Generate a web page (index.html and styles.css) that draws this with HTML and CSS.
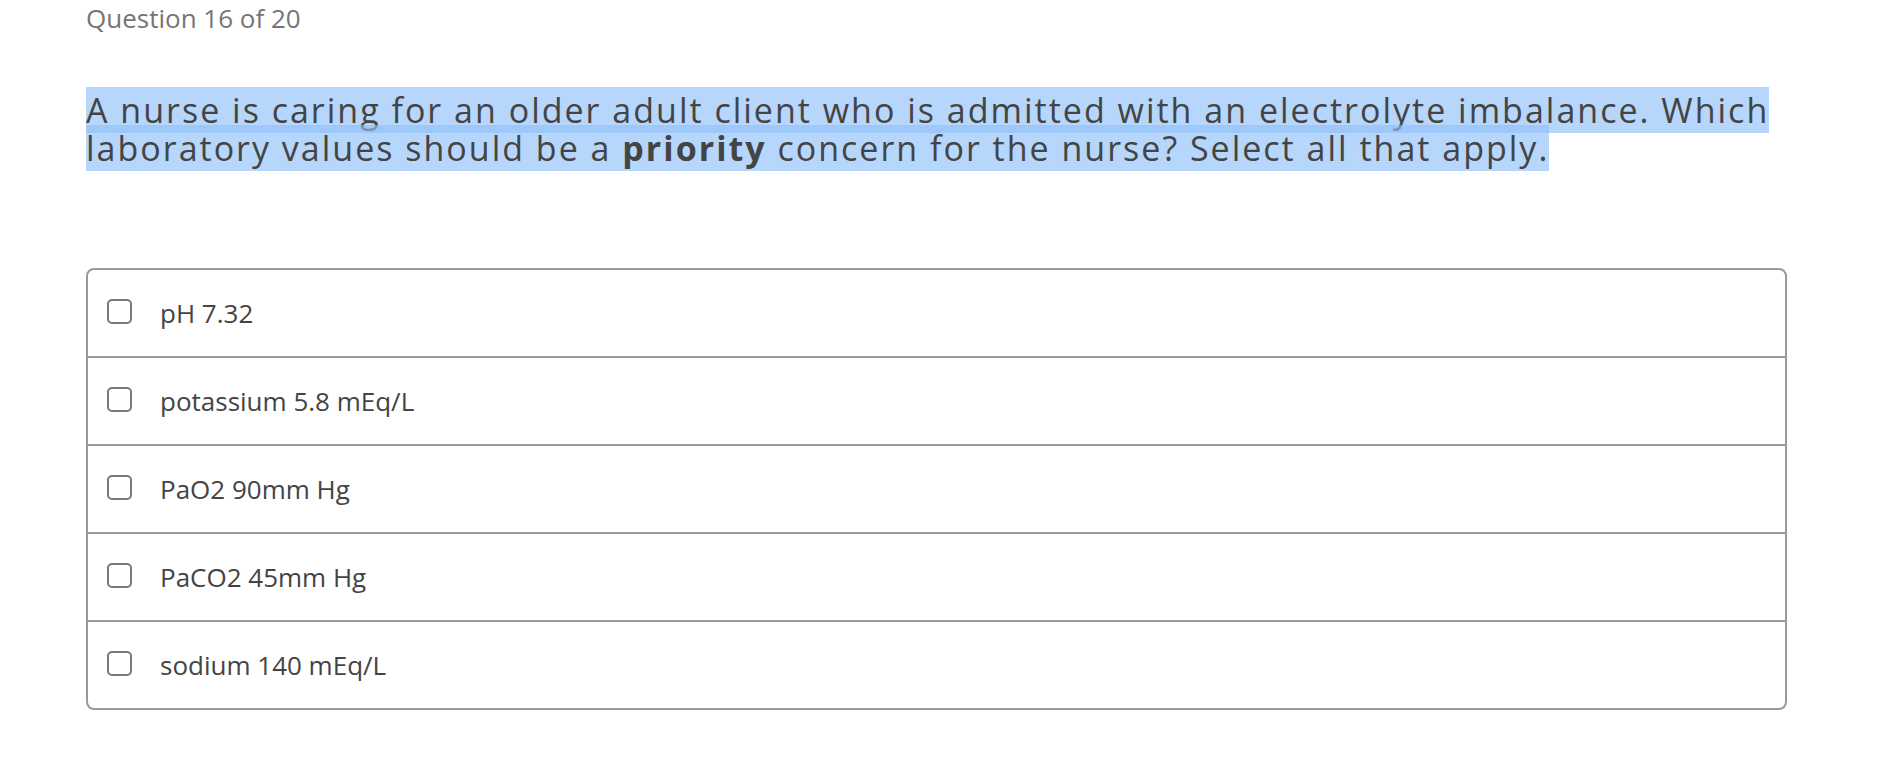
FILE: index.html
```html
<!DOCTYPE html>
<html lang="en">
<head>
<meta charset="utf-8">
<title>Question 16 of 20</title>
<link rel="stylesheet" href="styles.css">
</head>
<body>
<main class="quiz">
  <div class="counter">Question 16 of 20</div>
  <p class="stem"><span class="sel">A nurse is caring for an older adult client who is admitted with an electrolyte imbalance. Which laboratory values should be a <strong>priority</strong> concern for the nurse? Select all that apply.</span></p>
  <ul class="options">
    <li class="option"><span class="box"></span><span class="label">pH 7.32</span></li>
    <li class="option"><span class="box"></span><span class="label">potassium 5.8 mEq/L</span></li>
    <li class="option"><span class="box"></span><span class="label">PaO2 90mm Hg</span></li>
    <li class="option"><span class="box"></span><span class="label">PaCO2 45mm Hg</span></li>
    <li class="option"><span class="box"></span><span class="label">sodium 140 mEq/L</span></li>
  </ul>
</main>
</body>
</html>
```
FILE: styles.css
```css
html, body {
  margin: 0;
  padding: 0;
  background: #ffffff;
}
body {
  font-family: "Open Sans", "Liberation Sans", sans-serif;
  color: #444444;
}
.quiz {
  padding: 0 96px 0 86px;
}
.counter {
  font-size: 26px;
  line-height: 36px;
  color: #757575;
}
.stem {
  margin: 55px 0 0 0;
  font-size: 34px;
  line-height: 38px;
  letter-spacing: 2px;
  color: #444444;
}
.sel {
  background: rgba(145, 192, 249, 0.65);
}
.stem strong {
  font-weight: 700;
}
.options {
  list-style: none;
  margin: 101px 0 0 0;
  padding: 0;
  width: 1697px;
  border: 2px solid #9a9a9a;
  border-radius: 8px;
}
.option {
  display: flex;
  align-items: center;
  height: 86px;
  padding-left: 19px;
  border-top: 2px solid #9a9a9a;
}
.option:first-child {
  border-top: none;
}
.box {
  width: 21px;
  height: 21px;
  border: 2px solid #7a7a7a;
  border-radius: 5px;
  box-sizing: content-box;
  flex: none;
  margin-top: -3px;
}
.label {
  margin-left: 28px;
  font-size: 26px;
  color: #444444;
}
```
